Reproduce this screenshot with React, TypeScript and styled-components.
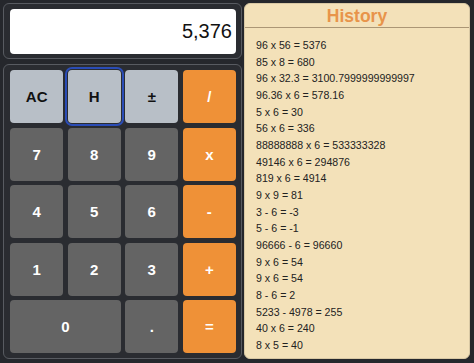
import React from "react";
import styled, { createGlobalStyle } from "styled-components";

const Global = createGlobalStyle`
  html, body { margin: 0; padding: 0; background: #25272c; }
  body { font-family: "Liberation Sans", Arial, sans-serif; }
`;

const Page = styled.div`
  width: 474px;
  height: 363px;
  box-sizing: border-box;
  padding: 3px 4px 4px 3px;
  display: flex;
  gap: 2px;
  background: #25272c;
`;

const LeftCol = styled.div`
  width: 239px;
  display: flex;
  flex-direction: column;
  gap: 5px;
`;

const Panel = styled.div`
  box-sizing: border-box;
  border: 1px solid #585b61;
  border-radius: 6px;
  background: #2a2c31;
`;

const DisplayPanel = styled(Panel)`
  height: 56px;
  padding: 5px 5px 4px 6px;
  display: flex;
`;

const Screen = styled.div`
  flex: 1;
  background: #ffffff;
  border-radius: 4px;
  display: flex;
  align-items: center;
  justify-content: flex-end;
  padding-right: 4px;
  font-size: 20px;
  color: #111;
`;

const Keypad = styled(Panel)`
  flex: 1;
  padding: 5px 5px 5px 6px;
  display: grid;
  grid-template-columns: repeat(4, 1fr);
  grid-template-rows: repeat(5, 1fr);
  gap: 4.5px 4.3px;
`;

type Kind = "light" | "dark" | "orange";

const Key = styled.button<{ $kind: Kind; $span?: number; $focus?: boolean }>`
  border: none;
  border-radius: 4px;
  font-family: "Liberation Sans", Arial, sans-serif;
  font-weight: bold;
  font-size: 15px;
  padding: 0;
  grid-column: span ${(p) => p.$span ?? 1};
  background: ${(p) =>
    p.$kind === "light" ? "#b8bfc7" : p.$kind === "orange" ? "#ef9137" : "#646464"};
  color: ${(p) => (p.$kind === "light" ? "#111" : "#fff")};
  outline: ${(p) => (p.$focus ? "2px solid #2a4cb6" : "none")};
  outline-offset: 1.5px;
`;

const History = styled.div`
  flex: 1;
  box-sizing: border-box;
  background: #f3e1b9;
  border-radius: 6px;
  border: 1px solid #d8c8a4;
  display: flex;
  flex-direction: column;
  overflow: hidden;
`;

const Title = styled.div`
  height: 24px;
  padding-top: 2px;
  box-sizing: border-box;
  border-bottom: 1px solid #ab9675;
  display: flex;
  align-items: center;
  justify-content: center;
  font-weight: bold;
  font-size: 17.5px;
  color: #e8944a;
`;

const List = styled.div`
  flex: 1;
  padding: 9px 0 0 11px;
  margin-bottom: 9px;
  overflow: hidden;
`;

const Item = styled.div`
  font-size: 10.6px;
  line-height: 16.67px;
  color: #222;
  white-space: nowrap;
`;

const history = [
  "96 x 56 = 5376",
  "85 x 8 = 680",
  "96 x 32.3 = 3100.7999999999997",
  "96.36 x 6 = 578.16",
  "5 x 6 = 30",
  "56 x 6 = 336",
  "88888888 x 6 = 533333328",
  "49146 x 6 = 294876",
  "819 x 6 = 4914",
  "9 x 9 = 81",
  "3 - 6 = -3",
  "5 - 6 = -1",
  "96666 - 6 = 96660",
  "9 x 6 = 54",
  "9 x 6 = 54",
  "8 - 6 = 2",
  "5233 - 4978 = 255",
  "40 x 6 = 240",
  "8 x 5 = 40",
];

const keys: { label: string; kind: Kind; span?: number; focus?: boolean }[] = [
  { label: "AC", kind: "light" },
  { label: "H", kind: "light", focus: true },
  { label: "±", kind: "light" },
  { label: "/", kind: "orange" },
  { label: "7", kind: "dark" },
  { label: "8", kind: "dark" },
  { label: "9", kind: "dark" },
  { label: "x", kind: "orange" },
  { label: "4", kind: "dark" },
  { label: "5", kind: "dark" },
  { label: "6", kind: "dark" },
  { label: "-", kind: "orange" },
  { label: "1", kind: "dark" },
  { label: "2", kind: "dark" },
  { label: "3", kind: "dark" },
  { label: "+", kind: "orange" },
  { label: "0", kind: "dark", span: 2 },
  { label: ".", kind: "dark" },
  { label: "=", kind: "orange" },
];

export default function App() {
  return (
    <>
      <Global />
      <Page>
        <LeftCol>
          <DisplayPanel>
            <Screen>5,376</Screen>
          </DisplayPanel>
          <Keypad>
            {keys.map((k, i) => (
              <Key key={i} $kind={k.kind} $span={k.span} $focus={k.focus}>
                {k.label}
              </Key>
            ))}
          </Keypad>
        </LeftCol>
        <History>
          <Title>History</Title>
          <List>
            {history.map((h, i) => (
              <Item key={i}>{h}</Item>
            ))}
          </List>
        </History>
      </Page>
    </>
  );
}
